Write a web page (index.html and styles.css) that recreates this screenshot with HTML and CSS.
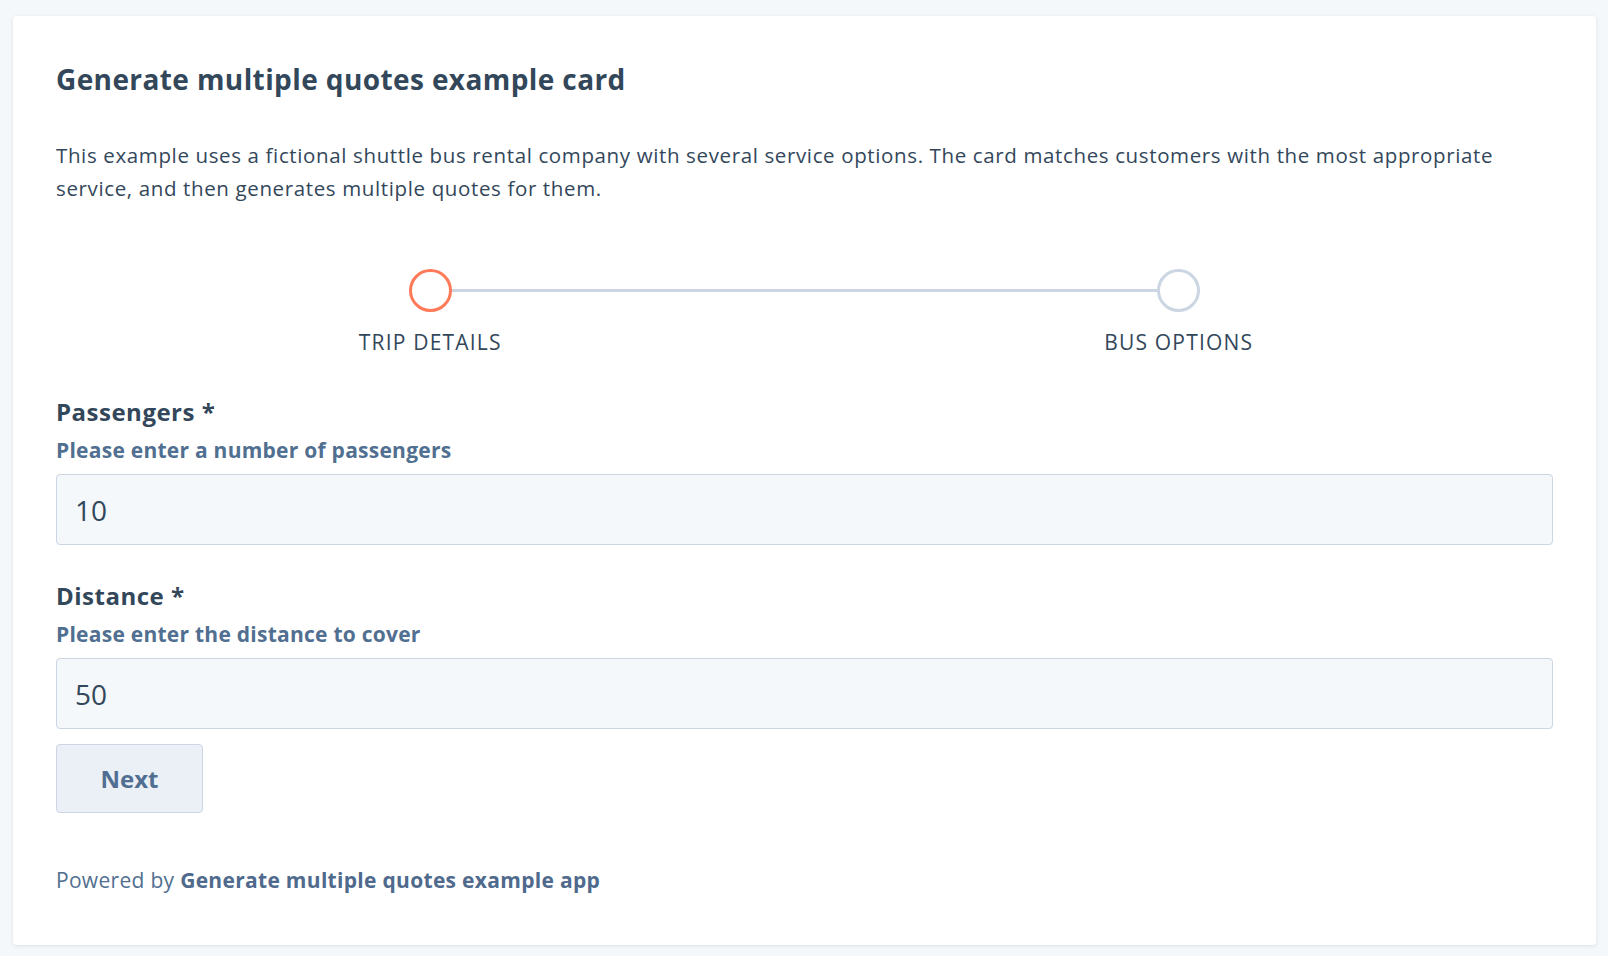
FILE: index.html
```html
<!DOCTYPE html>
<html lang="en">
<head>
<meta charset="utf-8">
<title>Generate multiple quotes example card</title>
<link rel="stylesheet" href="styles.css">
</head>
<body>
<div class="card">
  <h1 class="card-title">Generate multiple quotes example card</h1>
  <p class="card-desc">This example uses a fictional shuttle bus rental company with several service options. The card matches customers with the most appropriate service, and then generates multiple quotes for them.</p>

  <div class="stepper">
    <div class="track">
      <span></span>
      <span class="dot dot-active"></span>
      <span class="line"></span>
      <span class="dot"></span>
      <span></span>
    </div>
    <div class="step-labels">
      <span class="step-label">TRIP DETAILS</span>
      <span class="step-label">BUS OPTIONS</span>
    </div>
  </div>

  <div class="field">
    <label class="field-label" for="passengers">Passengers *</label>
    <div class="field-help">Please enter a number of passengers</div>
    <input class="field-input" id="passengers" type="text" value="10">
  </div>

  <div class="field field-second">
    <label class="field-label" for="distance">Distance *</label>
    <div class="field-help">Please enter the distance to cover</div>
    <input class="field-input" id="distance" type="text" value="50">
  </div>

  <button class="btn" type="button">Next</button>

  <p class="powered">Powered by <strong>Generate multiple quotes example app</strong></p>
</div>
</body>
</html>
```

FILE: styles.css
```css
* { box-sizing: border-box; }

html, body {
  margin: 0;
  background: #f5f8fa;
}

body {
  padding: 16px 12px 12px 13px;
  font-family: "Open Sans", "Noto Sans", sans-serif;
  color: #33475b;
}

.card {
  background: #ffffff;
  border-radius: 4px;
  box-shadow: 0 1px 4px rgba(45, 62, 80, 0.12);
  padding: 46px 43px 51px 43px;
}

.card-title {
  margin: 0;
  font-size: 28px;
  line-height: 34px;
  font-weight: 700;
  letter-spacing: 0.4px;
  color: #33475b;
}

.card-desc {
  margin: 43px 0 0 0;
  font-size: 20.5px;
  line-height: 33px;
  letter-spacing: 0.63px;
  color: #33475b;
}

.stepper {
  margin-top: 64px;
}

.track {
  display: grid;
  grid-template-columns: 1fr 43px 2fr 43px 1fr;
  align-items: center;
}

.dot {
  width: 43px;
  height: 43px;
  border-radius: 50%;
  border: 3px solid #cbd6e2;
  background: #ffffff;
}

.dot-active {
  border-color: #ff7a59;
}

.line {
  height: 3px;
  background: #cbd6e2;
}

.step-labels {
  display: grid;
  grid-template-columns: 1fr 1fr;
  margin-top: 16px;
}

.step-label {
  text-align: center;
  font-size: 21px;
  line-height: 28px;
  letter-spacing: 1.2px;
  color: #33475b;
}

.field {
  margin-top: 41px;
  display: flex;
  flex-direction: column;
}

.field-second {
  margin-top: 36px;
}

.field-label {
  font-size: 24px;
  line-height: 30px;
  font-weight: 700;
  letter-spacing: 0.5px;
  color: #33475b;
}

.field-help {
  margin-top: 9px;
  font-size: 21px;
  line-height: 28px;
  font-weight: 700;
  letter-spacing: 0.25px;
  color: #516f90;
}

.field-input {
  margin-top: 10px;
  height: 71px;
  width: 100%;
  border: 1px solid #cbd6e2;
  border-radius: 4px;
  background: #f5f8fa;
  padding: 0 18px;
  font-family: inherit;
  font-size: 28px;
  color: #33475b;
  outline: none;
}

.btn {
  display: block;
  margin-top: 15px;
  width: 147px;
  height: 69px;
  border: 1px solid #cbd6e2;
  border-radius: 4px;
  background: #eaf0f6;
  font-family: inherit;
  font-size: 24px;
  font-weight: 700;
  color: #506e91;
  cursor: pointer;
}

.powered {
  margin: 53px 0 0 0;
  font-size: 21px;
  line-height: 28px;
  letter-spacing: 0.3px;
  color: #516f90;
}

.powered strong {
  font-weight: 700;
  color: #4f6a8c;
}
```
